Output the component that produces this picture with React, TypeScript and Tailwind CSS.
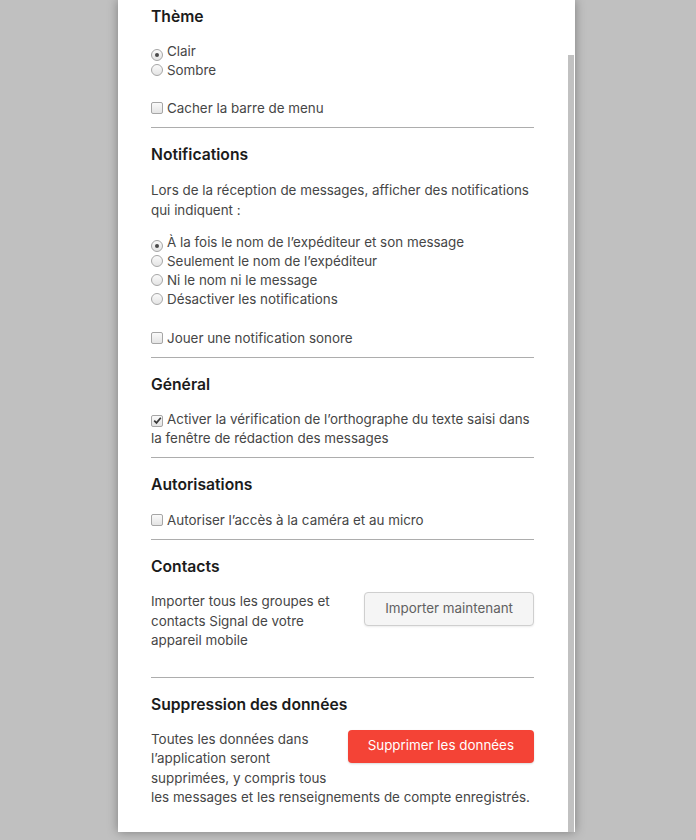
import React from 'react'

const Radio = ({ checked }: { checked?: boolean }) => (
  <span className="inline-flex items-center justify-center w-[12px] h-[12px] rounded-full border border-[#a6a6a6] bg-gradient-to-b from-[#fafafa] to-[#e4e4e4] mr-[4px] align-[-1px]">
    {checked ? <span className="w-[4px] h-[4px] rounded-full bg-[#4a4a4a]" /> : null}
  </span>
)

const Checkbox = ({ checked }: { checked?: boolean }) => (
  <span className="inline-flex items-center justify-center w-[12px] h-[12px] rounded-[2px] border border-[#a6a6a6] bg-gradient-to-b from-[#fafafa] to-[#e4e4e4] mr-[4px] align-[-1px]">
    {checked ? (
      <svg width="9" height="9" viewBox="0 0 9 9">
        <path d="M1.2 4.6 L3.5 6.9 L7.8 1.8" fill="none" stroke="#3a3a3a" strokeWidth="1.7" />
      </svg>
    ) : null}
  </span>
)

const Heading = ({ children, className }: { children: React.ReactNode; className?: string }) => (
  <h2 className={"text-[15.7px] leading-[20px] font-semibold text-[#1b1b1b] " + (className ?? '')}>{children}</h2>
)

const Divider = ({ className }: { className?: string }) => (
  <div className={"h-px bg-[#adadad] " + (className ?? '')} />
)

export default function App() {
  return (
    <div className="w-[696px] h-[840px] bg-[#c0c0c0] overflow-hidden" style={{ fontFamily: 'Inter, "Liberation Sans", sans-serif' }}>
      <div className="ml-[118px] w-[457px] h-[832px] bg-white flex shadow-[0_0_10px_rgba(0,0,0,0.35)]">
        <div className="flex-1 pl-[33px] pr-[34px] pt-[7px] text-[13.4px] text-[#464646]">
          <Heading>Thème</Heading>
          <div className="mt-[15px] leading-[19px]">
            <div><Radio checked />Clair</div>
            <div><Radio />Sombre</div>
            <div className="mt-[19px]"><Checkbox />Cacher la barre de menu</div>
          </div>
          <Divider className="mt-[9px]" />

          <Heading className="mt-[17px]">Notifications</Heading>
          <p className="mt-[15px] leading-[20px]">
            Lors de la réception de messages, afficher des notifications qui indiquent :
          </p>
          <div className="mt-[13px] leading-[19px]">
            <div><Radio checked />À la fois le nom de l’expéditeur et son message</div>
            <div><Radio />Seulement le nom de l’expéditeur</div>
            <div><Radio />Ni le nom ni le message</div>
            <div><Radio />Désactiver les notifications</div>
            <div className="mt-[20px]"><Checkbox />Jouer une notification sonore</div>
          </div>
          <Divider className="mt-[9px]" />

          <Heading className="mt-[17px]">Général</Heading>
          <div className="mt-[15px] leading-[19px]">
            <Checkbox checked />Activer la vérification de l’orthographe du texte saisi dans la fenêtre de rédaction des messages
          </div>
          <Divider className="mt-[9px]" />

          <Heading className="mt-[17px]">Autorisations</Heading>
          <div className="mt-[16px] leading-[19px]">
            <Checkbox />Autoriser l’accès à la caméra et au micro
          </div>
          <Divider className="mt-[9px]" />

          <Heading className="mt-[17px]">Contacts</Heading>
          <div className="mt-[15px] leading-[19.5px] flow-root">
            <button className="float-right ml-[20px] mb-[15px] h-[34px] px-[20px] rounded-[4px] border border-[#cfcfcf] bg-[#f5f5f5] text-[#616161] text-[13.4px] shadow-[0_1px_2px_rgba(0,0,0,0.08)]">
              Importer maintenant
            </button>
            Importer tous les groupes et contacts Signal de votre appareil mobile
          </div>
          <Divider className="mt-[26px]" />

          <Heading className="mt-[17px]">Suppression des données</Heading>
          <div className="mt-[15px] leading-[19.5px] flow-root">
            <button className="float-right ml-[20px] mb-[15px] h-[33px] px-[20px] rounded-[4px] bg-[#f44336] text-white text-[13.4px] shadow-[0_1px_2px_rgba(0,0,0,0.15)]">
              Supprimer les données
            </button>
            Toutes les données dans l’application seront supprimées, y compris tous les messages et les renseignements de compte enregistrés.
          </div>
        </div>
        <div className="w-[6px] mr-[1px] flex flex-col">
          <div className="h-[55px]" />
          <div className="flex-1 bg-[#c1c1c1]" />
        </div>
      </div>
    </div>
  )
}
